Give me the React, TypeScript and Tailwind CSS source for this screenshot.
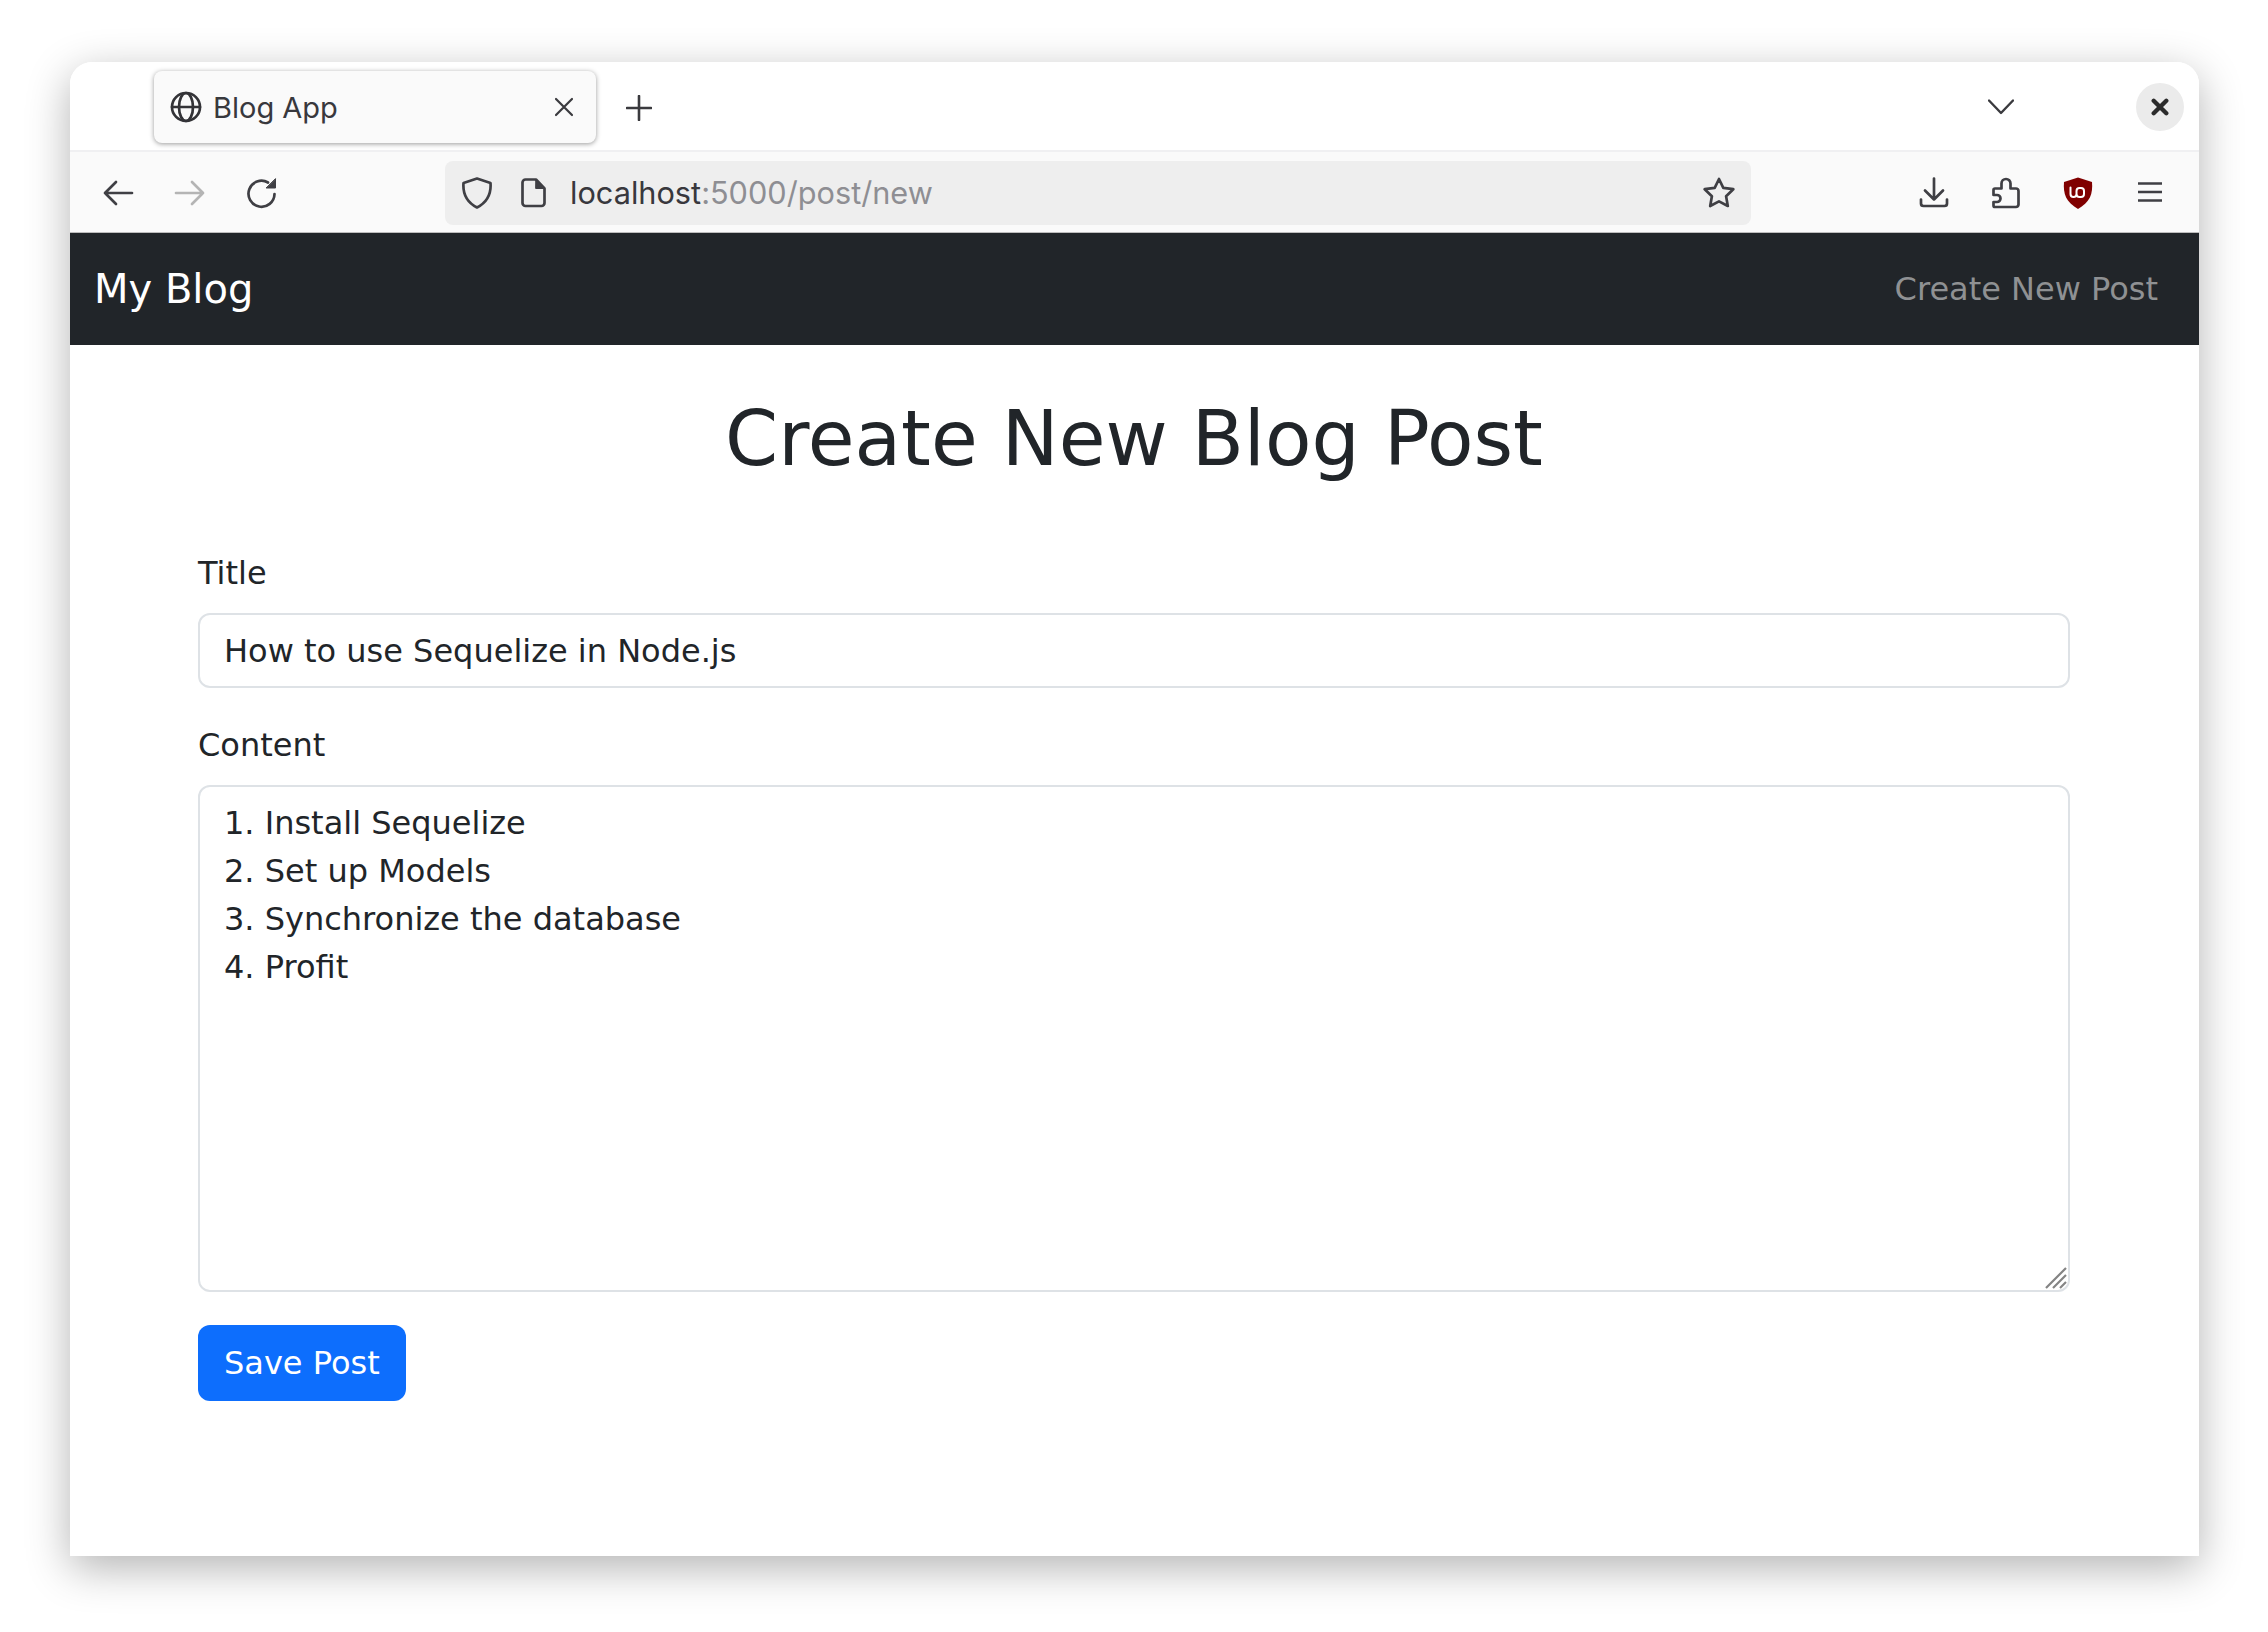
import { FC } from 'react';

interface IIconProps {
  className?: string;
}

const Icon: FC<IIconProps & { children: React.ReactNode }> = ({ className, children }) => (
  <svg
    viewBox="0 0 32 32"
    fill="none"
    stroke="currentColor"
    strokeWidth="2.7"
    strokeLinecap="round"
    strokeLinejoin="round"
    className={className ?? 'w-8 h-8 shrink-0 text-[#3f3f44]'}
  >
    {children}
  </svg>
);

const Globe = () => (
  <Icon className="w-[32px] h-[32px] shrink-0 text-[#333337]">
    <circle cx="16" cy="16" r="14" />
    <ellipse cx="16" cy="16" rx="7" ry="14" />
    <path d="M2 16h28" />
  </Icon>
);

const BackArrow = ({ className }: IIconProps) => (
  <Icon className={className}>
    <path d="M30 16H3M14 5 3 16l11 11" />
  </Icon>
);

const ForwardArrow = ({ className }: IIconProps) => (
  <Icon className={className}>
    <path d="M2 16h27M18 5l11 11-11 11" />
  </Icon>
);

const Reload = () => (
  <Icon>
    <path d="M28.500 17A13 13 0 1 1 22 5.500" />
    <path d="M20.500 11h9V2z" fill="currentColor" strokeWidth="1" />
  </Icon>
);

const Shield = () => (
  <Icon>
    <path d="M16 1.500 29.500 6c.8 10-3 19-13.500 24.500C5.500 25 1.700 16 2.500 6z" />
  </Icon>
);

const FilePage = () => (
  <Icon>
    <path d="M8.500 2.500h10.500l8.500 9v14.500a3 3 0 0 1-3 3H8.500a3 3 0 0 1-3-3V5.500a3 3 0 0 1 3-3z" />
    <path d="M19 2.500l8.500 9H19z" fill="currentColor" strokeWidth="1" />
  </Icon>
);

const Star = () => (
  <Icon>
    <path d="M16 2l4.300 8.800 10 1.400-7.200 7 1.700 9.800L16 24.400 7.200 29l1.700-9.800-7.200-7 10-1.400z" />
  </Icon>
);

const Download = () => (
  <Icon>
    <path d="M16 1.500v21M7 13.500l9 9 9-9" />
    <path d="M3 22.500v4A2.500 2.500 0 0 0 5.500 29h21a2.500 2.500 0 0 0 2.500-2.500v-4" />
  </Icon>
);

const Puzzle = () => (
  <Icon>
    <path d="M5 30a1.500 1.500 0 0 1-1.500-1.500V25h3.500a3.500 3.500 0 0 0 0-7H3.500v-5A1.500 1.500 0 0 1 5 11.500h6.500v-5a4.500 4.500 0 0 1 9 0v5H26a2.500 2.500 0 0 1 2.500 2.500v13.500A2.500 2.500 0 0 1 26 30z" />
  </Icon>
);

const UBlock = () => (
  <svg viewBox="0 0 32 32" className="w-8 h-8 shrink-0">
    <path d="M16 0.500 30 5c1 12-2 20-14 27C4 25 1 17 2 5z" fill="#800000" />
    <path
      d="M8.500 10.500v6.500a3 3 0 0 0 6 0v-3a3 3 0 0 1 3-3h1.500a3 3 0 0 1 3 3v3a3 3 0 0 1-3 3h-1.500a3 3 0 0 1-3-3"
      fill="none"
      stroke="#ffffff"
      strokeWidth="2"
      strokeLinecap="round"
    />
  </svg>
);

const Hamburger = () => (
  <Icon className="w-8 h-8 shrink-0 text-[#3f3f44]">
    <path d="M4 6.500h24M4 15h24M4 23.500h24" strokeLinecap="butt" />
  </Icon>
);

const ResizeGrip = () => (
  <svg viewBox="0 0 22 22" className="absolute right-[3px] bottom-[3px] w-[22px] h-[22px] text-[#848484] pointer-events-none">
    <path d="M1 21 21 1M8 21 21 8M15 21 21 15" stroke="currentColor" strokeWidth="2.200" fill="none" />
  </svg>
);

const TabBar = () => (
  <div className="flex items-start h-[90px] shrink-0 bg-white border-b-2 border-[#f0f0f2]">
    <div className="ml-[84px] mt-[9px] w-[442px] h-[72px] flex items-center pl-4 pr-[22px] rounded-lg bg-[#fafafa] shadow-[0_1px_5px_rgba(0,0,0,0.4)]">
      <Globe />
      <span className="ml-[11px] pt-[2px] text-[29px] text-[#38383d] font-['Inter',sans-serif] grow">Blog App</span>
      <svg viewBox="0 0 20 20" className="w-5 h-5 text-[#3a3a3e]" fill="none" stroke="currentColor" strokeWidth="2.200" strokeLinecap="round">
        <path d="M2 2l16 16M18 2 2 18" />
      </svg>
    </div>
    <svg viewBox="0 0 26 26" className="ml-[30px] mt-[33px] w-[26px] h-[26px] text-[#3a3a3e]" fill="none" stroke="currentColor" strokeWidth="2.600" strokeLinecap="round">
      <path d="M13 1v24M1 13h24" />
    </svg>
    <div className="grow" />
    <svg viewBox="0 0 26 16" className="mt-[37px] w-[26px] h-[16px] text-[#3a3a3e]" fill="none" stroke="currentColor" strokeWidth="2.400" strokeLinecap="round" strokeLinejoin="round">
      <path d="M1 1.500 13 14 25 1.500" />
    </svg>
    <div className="ml-[122px] mt-[21px] w-[48px] h-[48px] flex items-center justify-center rounded-full bg-[#ebebeb]">
      <svg viewBox="0 0 20 20" className="w-[18px] h-[18px] text-[#2b2b2b]" fill="none" stroke="currentColor" strokeWidth="4.800" strokeLinecap="round">
        <path d="M3 3l14 14M17 3 3 17" />
      </svg>
    </div>
    <div className="w-[15px]" />
  </div>
);

const ToolBar = () => (
  <div className="flex items-center h-[81px] shrink-0 bg-[#fafafa] pl-8 pr-[33px] pt-[2px] border-b border-[#bdbdbd]">
    <div className="flex items-center gap-10">
      <BackArrow className="w-8 h-8 shrink-0 text-[#3f3f44]" />
      <ForwardArrow className="w-8 h-8 shrink-0 text-[#b4b4b4]" />
      <Reload />
    </div>
    <div className="ml-[167px] w-[1306px] h-[64px] flex items-center rounded-lg bg-[#eeeeee] pl-4 pr-4">
      <Shield />
      <div className="ml-6">
        <FilePage />
      </div>
      <span className="ml-[21px] text-[30.700px] font-['Inter',sans-serif] grow whitespace-nowrap">
        <span className="text-[#38383d]">localhost</span>
        <span className="text-[#8e8e93]">:5000/post/new</span>
      </span>
      <Star />
    </div>
    <div className="grow" />
    <div className="flex items-center gap-10">
      <Download />
      <Puzzle />
      <UBlock />
      <Hamburger />
    </div>
  </div>
);

const NavBar = () => (
  <div className="flex items-center justify-between h-[112px] shrink-0 bg-[#212529] pl-6 pr-[41px]">
    <span className="text-[40px] text-white">My Blog</span>
    <span className="text-[32px] text-[#8f9193]">Create New Post</span>
  </div>
);

const App = () => {
  return (
    <div className="w-[2268px] h-[1632px] pl-[70px] pr-[69px] pt-[62px] bg-white font-['DejaVu_Sans',sans-serif] overflow-hidden">
      <div className="flex flex-col h-[1494px] bg-white rounded-t-[22px] overflow-hidden shadow-[0_12px_44px_rgba(0,0,0,0.3)]">
        <TabBar />
        <ToolBar />
        <NavBar />
        <div className="flex flex-col pl-[128px] pr-[129px] pt-[48px] text-[32px] text-[#212529]">
          <h1 className="text-[76px] leading-[92px] text-center font-normal mb-[64px]">Create New Blog Post</h1>
          <label className="leading-[48px] mb-4">Title</label>
          <input
            readOnly
            value="How to use Sequelize in Node.js"
            className="h-[75px] px-[24px] border-2 border-[#dee2e6] rounded-xl bg-white mb-[33px] outline-none"
          />
          <label className="leading-[48px] mb-4">Content</label>
          <div className="relative mb-[33px]">
            <textarea
              readOnly
              value={'1. Install Sequelize\n2. Set up Models\n3. Synchronize the database\n4. Profit'}
              className="block w-full h-[507px] px-[24px] py-[12px] leading-[48px] border-2 border-[#dee2e6] rounded-xl bg-white outline-none resize-none"
            />
            <ResizeGrip />
          </div>
          <div>
            <button className="h-[76px] px-[26px] rounded-xl bg-[#0d6efd] text-white">Save Post</button>
          </div>
        </div>
      </div>
    </div>
  );
};

export default App;
